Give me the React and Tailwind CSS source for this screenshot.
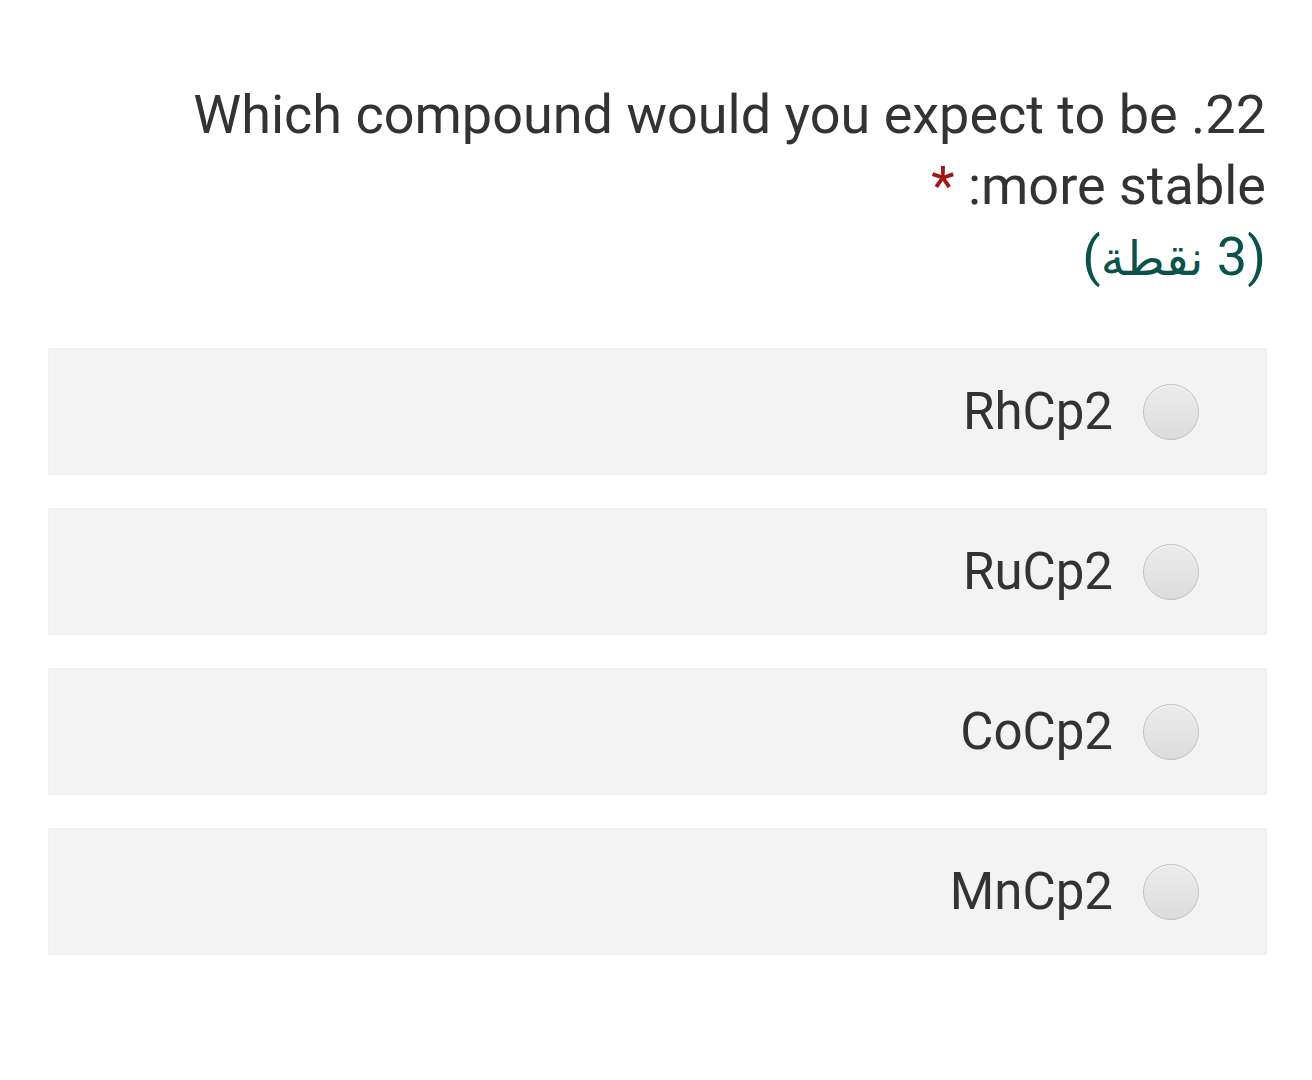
import React from "react";

const options = ["RhCp2", "RuCp2", "CoCp2", "MnCp2"];

function Radio() {
  return (
    <span className="block w-[56px] h-[56px] rounded-full border-[1.5px] border-[#bfbfbf] bg-gradient-to-b from-[#ebebeb] to-[#dcdcdc] shadow-[inset_0_1px_1px_rgba(255,255,255,0.8)] shrink-0" />
  );
}

export default function App() {
  return (
    <div
      dir="rtl"
      className="w-[1312px] h-[1080px] bg-white pl-[48px] pr-[46px] pt-[79px]"
      style={{ fontFamily: 'Roboto, "DejaVu Sans", "Noto Sans", sans-serif' }}
    >
      <div className="text-[54px] leading-[71px] text-[#333333] pl-[100px]">
        22. Which compound would you expect to be more stable:{" "}
        <span className="text-[#a31515]">*</span>
      </div>
      <div className="text-[54px] leading-[71px] h-[71px] text-[#0b524c]">
        (3 <span className="text-[48px] leading-none">نقطة</span>)
      </div>
      <div className="mt-[56px] flex flex-col gap-[33px] mr-[-1px]">
        {options.map((o) => (
          <div
            key={o}
            className="h-[127px] bg-[#f3f3f3] border border-[#f0f0f0] flex items-center pr-[67px] gap-[30px]"
          >
            <Radio />
            <span className="text-[51px] text-[#333333] leading-none">{o}</span>
          </div>
        ))}
      </div>
    </div>
  );
}
